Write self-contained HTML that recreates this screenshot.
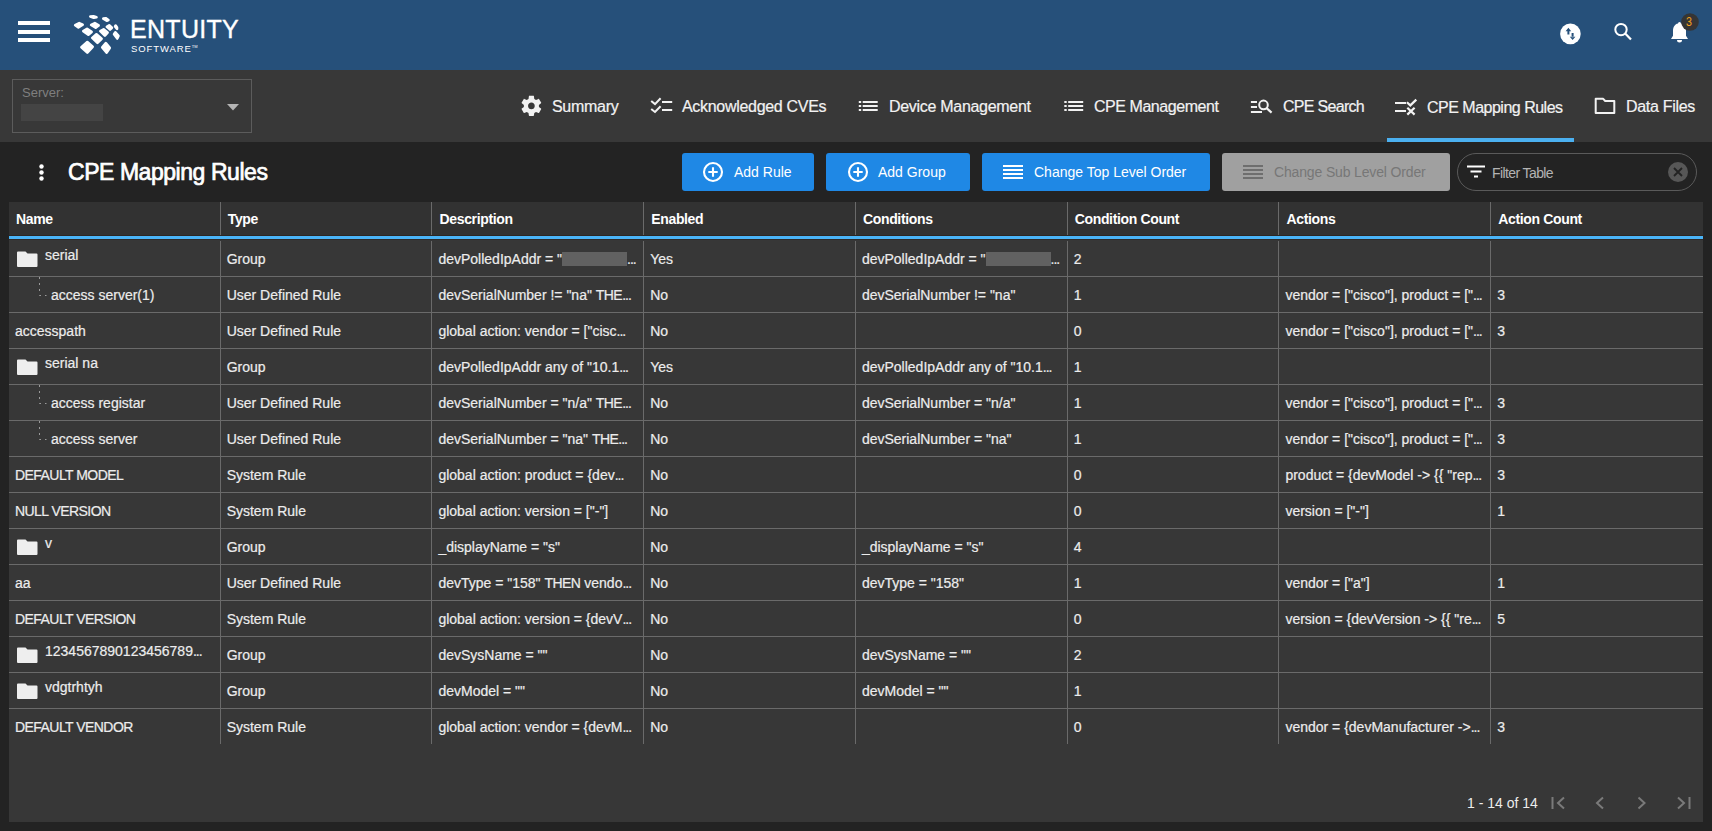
<!DOCTYPE html><html><head><meta charset="utf-8"><title>CPE Mapping Rules</title><style>
*{box-sizing:border-box;margin:0;padding:0}
html,body{width:1712px;height:831px;overflow:hidden;background:#232323;font-family:"Liberation Sans",sans-serif;color:#ececec}
body>div,body>span,body>svg{position:absolute}
.t{white-space:nowrap}
.tab{top:98px;font-size:16px;line-height:18px;color:#f2f2f2;letter-spacing:-0.3px;-webkit-text-stroke:0.2px #f2f2f2}
.btn{top:153px;height:38px;border-radius:3px;background:#1f88e5}
.bt{top:164px;font-size:14px;line-height:16px;color:#fff;white-space:nowrap}
.th{top:211px;font-size:14px;font-weight:bold;line-height:16px;color:#fff;white-space:nowrap;letter-spacing:-0.35px}
.td{font-size:14px;line-height:16px;color:#ececec;white-space:nowrap;-webkit-text-stroke:0.2px #ececec}
.vl{width:1px;background:#6a6a6a}
.hl{left:9px;width:1694px;height:1px;background:#6a6a6a}
</style></head><body>
<div style="left:0;top:0;width:1712px;height:70px;background:#26507a"></div>
<div style="left:18px;top:21px;width:32px;height:4px;background:#fff"></div>
<div style="left:18px;top:29.5px;width:32px;height:4px;background:#fff"></div>
<div style="left:18px;top:38px;width:32px;height:4px;background:#fff"></div>
<svg style="left:0;top:0" width="140" height="70" viewBox="0 0 140 70"><polygon points="90.34,16.51 93.46,16.20 96.49,17.26 93.76,17.79" fill="#fff" stroke="#fff" stroke-width="2.6" stroke-linejoin="round"/><polygon points="103.29,18.60 105.66,18.19 108.44,20.02 106.74,20.76" fill="#fff" stroke="#fff" stroke-width="2.6" stroke-linejoin="round"/><polygon points="75.19,25.21 79.22,23.12 82.69,24.62 78.40,27.41" fill="#fff" stroke="#fff" stroke-width="2.6" stroke-linejoin="round"/><polygon points="91.15,24.86 94.82,23.13 98.65,25.46 95.67,27.69" fill="#fff" stroke="#fff" stroke-width="2.6" stroke-linejoin="round"/><polygon points="106.84,26.87 109.20,25.29 111.93,27.75 110.03,29.58" fill="#fff" stroke="#fff" stroke-width="2.6" stroke-linejoin="round"/><polygon points="115.09,26.47 115.67,25.50 116.98,27.53 117.05,28.87" fill="#fff" stroke="#fff" stroke-width="2.6" stroke-linejoin="round"/><polygon points="83.30,31.12 87.05,28.80 91.61,31.93 88.35,34.73" fill="#fff" stroke="#fff" stroke-width="2.6" stroke-linejoin="round"/><polygon points="100.32,31.05 103.57,29.35 107.60,32.63 104.88,35.54" fill="#fff" stroke="#fff" stroke-width="2.6" stroke-linejoin="round"/><polygon points="114.05,34.22 115.36,32.28 118.48,35.93 117.26,38.54" fill="#fff" stroke="#fff" stroke-width="2.6" stroke-linejoin="round"/><polygon points="92.24,37.87 96.43,34.23 101.63,38.71 97.45,42.82" fill="#fff" stroke="#fff" stroke-width="2.6" stroke-linejoin="round"/><polygon points="81.42,47.18 87.30,42.09 92.70,46.75 87.30,52.56" fill="#fff" stroke="#fff" stroke-width="2.6" stroke-linejoin="round"/><polygon points="102.25,47.34 105.83,43.17 109.75,47.93 106.67,52.57" fill="#fff" stroke="#fff" stroke-width="2.6" stroke-linejoin="round"/></svg>
<span class="t" style="left:130px;top:15px;font-size:25px;line-height:28px;color:#fff;letter-spacing:0.3px;-webkit-text-stroke:0.35px #fff">ENTUITY</span>
<span class="t" style="left:131px;top:43px;font-size:9.5px;line-height:11px;color:#fff;letter-spacing:0.9px">SOFTWARE<span style="position:relative;font-size:4px;top:-4px;letter-spacing:0">TM</span></span>
<svg style="left:1555px;top:10px" width="150" height="50" viewBox="1555 10 150 50"><circle cx="1570.4" cy="33.9" r="10.3" fill="#fff"/><path d="M1567.4 30.6h2v4h-2z M1565.6 31.3L1568.4 27.8L1571.2 31.3z" fill="#26507a"/><path d="M1571.6 33.1h2v4.2h-2z M1569.8 36.7L1572.6 40L1575.4 36.7z" fill="#26507a"/><circle cx="1621" cy="29.6" r="5.7" stroke="#fff" stroke-width="2" fill="none"/><path d="M1625.2 33.6L1631 39.6" stroke="#fff" stroke-width="2.2"/><path d="M1679.5 23.2c-4 0-6.5 3.2-6.5 7.5v5l-2 3.2h17l-2-3.2v-5c0-4.3-2.5-7.5-6.5-7.5z" fill="#fff"/><circle cx="1679.5" cy="23.6" r="1.5" fill="#fff"/><path d="M1677 40h5a2.5 2.5 0 0 1-5 0z" fill="#fff"/><circle cx="1690" cy="22" r="8.8" fill="#353535"/></svg>
<span class="t" style="left:1686.3px;top:14.2px;font-size:13px;line-height:15px;color:#f7a21b;transform:scaleX(0.82);transform-origin:0 0">3</span>
<div style="left:0;top:70px;width:1712px;height:72px;background:#383838"></div>
<div style="left:12px;top:79px;width:240px;height:54px;border:1px solid #5c5c5c"></div>
<span class="t" style="left:22px;top:85px;font-size:13px;line-height:15px;color:#7f7f7f">Server:</span>
<div style="left:21px;top:104px;width:82px;height:17px;background:#444"></div>
<svg style="left:226px;top:103px" width="14" height="9"><path d="M1 1h12l-6 6.5z" fill="#b4b4b4"/></svg>
<span class="t tab" style="left:552px;top:98px;letter-spacing:-0.3px">Summary</span>
<span class="t tab" style="left:682px;top:98px;letter-spacing:-0.3px">Acknowledged CVEs</span>
<span class="t tab" style="left:889px;top:98px;letter-spacing:-0.3px">Device Management</span>
<span class="t tab" style="left:1094px;top:98px;letter-spacing:-0.45px">CPE Management</span>
<span class="t tab" style="left:1283px;top:98px;letter-spacing:-0.7px">CPE Search</span>
<span class="t tab" style="left:1427px;top:99px;letter-spacing:-0.5px">CPE Mapping Rules</span>
<span class="t tab" style="left:1626px;top:98px;letter-spacing:-0.3px">Data Files</span>
<svg style="left:0;top:70px" width="1712" height="72" viewBox="0 70 1712 72"><g transform="translate(518.8,93.3) scale(1.05)"><path fill="#f2f2f2" fill-rule="evenodd" d="M19.14,12.94c0.04-0.3,0.06-0.61,0.06-0.94c0-0.32-0.02-0.64-0.07-0.94l2.03-1.58c0.18-0.14,0.23-0.41,0.12-0.61l-1.92-3.32c-0.12-0.22-0.37-0.29-0.59-0.22l-2.39,0.96c-0.5-0.38-1.03-0.7-1.62-0.94L14.4,2.81c-0.04-0.24-0.24-0.41-0.48-0.41h-3.84c-0.24,0-0.43,0.17-0.47,0.41L9.25,5.35C8.66,5.59,8.12,5.92,7.63,6.29L5.24,5.33c-0.22-0.08-0.47,0-0.59,0.22L2.74,8.87C2.62,9.08,2.66,9.34,2.86,9.48l2.03,1.58C4.84,11.36,4.8,11.69,4.8,12s0.02,0.64,0.07,0.94l-2.03,1.58c-0.18,0.14-0.23,0.41-0.12,0.61l1.92,3.32c0.12,0.22,0.37,0.29,0.59,0.22l2.39-0.96c0.5,0.38,1.03,0.7,1.62,0.94l0.36,2.54c0.05,0.24,0.24,0.41,0.48,0.41h3.84c0.24,0,0.44-0.17,0.47-0.41l0.36-2.54c0.59-0.24,1.13-0.56,1.62-0.94l2.39,0.96c0.22,0.08,0.47,0,0.59-0.22l1.92-3.32c0.12-0.22,0.07-0.47-0.12-0.61L19.14,12.94z M12,15.2c-1.77,0-3.2-1.43-3.2-3.2s1.43-3.2,3.2-3.2s3.2,1.43,3.2,3.2S13.77,15.2,12,15.2z"/></g><path d="M651.2 100.9l3.8 3.2 5.6-5.8M651.2 108.9l3.8 3.1 5.6-5.8" stroke="#f2f2f2" stroke-width="2" fill="none"/><path d="M662 102h10.2M662 110h10.2" stroke="#f2f2f2" stroke-width="2"/><path d="M858.8 102h2.4M858.8 106h2.4M858.8 110h2.4M862.7 102h15M862.7 106h15M862.7 110h15" stroke="#f2f2f2" stroke-width="2"/><path d="M1064.3 102h2.4M1064.3 106h2.4M1064.3 110h2.4M1068.2 102h15M1068.2 106h15M1068.2 110h15" stroke="#f2f2f2" stroke-width="2"/><path d="M1250.9 102h6.1M1250.9 107h6.1M1250.9 112h11.1" stroke="#f2f2f2" stroke-width="2"/><circle cx="1263.5" cy="104.9" r="4.3" stroke="#f2f2f2" stroke-width="2" fill="none"/><path d="M1266.6 108.2l5 4.4" stroke="#f2f2f2" stroke-width="2.2"/><path d="M1395 103h11M1395 111h11" stroke="#f2f2f2" stroke-width="2"/><path d="M1406.9 102.3l3.4 3.1 6-5.8" stroke="#f2f2f2" stroke-width="2.2" fill="none"/><path d="M1407.3 107.8l7.3 6.8M1414.6 107.8l-7.3 6.8" stroke="#f2f2f2" stroke-width="2.2"/><path d="M1595.7 98.8h7.5l2 2.2h9.1v11.9h-18.6z" stroke="#f2f2f2" stroke-width="2" fill="none" stroke-linejoin="round"/></svg>
<div style="left:1387px;top:138px;width:187px;height:4px;background:#4bb0f0"></div>
<svg style="left:36px;top:160.5px" width="12" height="24"><circle cx="5.5" cy="5.5" r="2.2" fill="#fff"/><circle cx="5.5" cy="11.5" r="2.2" fill="#fff"/><circle cx="5.5" cy="17.5" r="2.2" fill="#fff"/></svg>
<span class="t" style="left:68px;top:159px;font-size:23px;line-height:26px;color:#fff;letter-spacing:-0.45px;-webkit-text-stroke:0.7px #fff">CPE Mapping Rules</span>
<div class="btn" style="left:682px;width:132px"></div>
<svg style="left:702px;top:161px" width="22" height="22" viewBox="0 0 22 22"><circle cx="11" cy="11" r="9" stroke="#fff" stroke-width="2.1" fill="none"/><path d="M11 6.3v9.4M6.3 11h9.4" stroke="#fff" stroke-width="2.1"/></svg>
<span class="bt" style="left:734px">Add Rule</span>
<div class="btn" style="left:826px;width:144px"></div>
<svg style="left:846.5px;top:161px" width="22" height="22" viewBox="0 0 22 22"><circle cx="11" cy="11" r="9" stroke="#fff" stroke-width="2.1" fill="none"/><path d="M11 6.3v9.4M6.3 11h9.4" stroke="#fff" stroke-width="2.1"/></svg>
<span class="bt" style="left:878px">Add Group</span>
<div class="btn" style="left:982px;width:228px"></div>
<svg style="left:1003px;top:164px" width="20" height="16" viewBox="0 0 20 16"><path d="M0 2h20M0 6h20M0 10h20M0 14h20" stroke="#fff" stroke-width="1.8"/></svg>
<span class="bt" style="left:1034px">Change Top Level Order</span>
<div class="btn" style="left:1222px;width:228px;background:#a0a0a0"></div>
<svg style="left:1243px;top:164px" width="20" height="16" viewBox="0 0 20 16"><path d="M0 2h20M0 6h20M0 10h20M0 14h20" stroke="#6e6e6e" stroke-width="1.8"/></svg>
<span class="bt" style="left:1274px;color:#777;letter-spacing:-0.15px">Change Sub Level Order</span>
<div style="left:1457px;top:153px;width:240px;height:38px;border:1px solid #5a5a5a;border-radius:19px"></div>
<svg style="left:1466px;top:165px" width="20" height="14" viewBox="0 0 20 14"><path d="M1 1.5h18M4.5 6.5h11M8 11.5h4" stroke="#fff" stroke-width="1.8"/></svg>
<span class="t" style="left:1492px;top:165px;font-size:14px;line-height:16px;color:#b4b4b4;letter-spacing:-0.6px">Filter Table</span>
<svg style="left:1667px;top:161px" width="22" height="22" viewBox="0 0 22 22"><circle cx="11" cy="11" r="10" fill="#575757"/><path d="M7 7l8 8M15 7l-8 8" stroke="#232323" stroke-width="1.8"/></svg>
<div style="left:9px;top:202px;width:1694px;height:620px;background:#373737"></div>
<div style="left:9px;top:202px;width:1694px;height:34px;background:#323232"></div>
<span class="th" style="left:16.00px">Name</span>
<span class="th" style="left:227.75px">Type</span>
<div class="vl" style="left:220px;top:202px;height:34px"></div>
<span class="th" style="left:439.50px">Description</span>
<div class="vl" style="left:431px;top:202px;height:34px"></div>
<span class="th" style="left:651.25px">Enabled</span>
<div class="vl" style="left:643px;top:202px;height:34px"></div>
<span class="th" style="left:863.00px">Conditions</span>
<div class="vl" style="left:855px;top:202px;height:34px"></div>
<span class="th" style="left:1074.75px">Condition Count</span>
<div class="vl" style="left:1067px;top:202px;height:34px"></div>
<span class="th" style="left:1286.50px">Actions</span>
<div class="vl" style="left:1278px;top:202px;height:34px"></div>
<span class="th" style="left:1498.25px">Action Count</span>
<div class="vl" style="left:1490px;top:202px;height:34px"></div>
<div style="left:9px;top:235px;width:1694px;height:1px;background:#2c2725"></div>
<div style="left:9px;top:236px;width:1694px;height:3px;background:#4ab4f8"></div>
<div style="left:9px;top:239px;width:1694px;height:1px;background:#2e2a28"></div>
<svg style="left:16px;top:251px" width="22" height="17" viewBox="0 0 22 17"><path d="M1.5 0.5h8l2 2h9a1 1 0 0 1 1 1v11.5a1 1 0 0 1-1 1h-18.5a1 1 0 0 1-1-1v-13.5a1 1 0 0 1 1-1z" fill="#eeeeee"/></svg>
<span class="td" style="left:45px;top:247px">serial</span>
<span class="td" style="left:226.65px;top:251px">Group</span>
<span class="td" style="left:438.40px;top:251px">devPolledIpAddr = "<span style="position:relative;display:inline-block;width:65px;height:14px;background:#616161;vertical-align:-2px"></span><span style="letter-spacing:-1px">...</span></span>
<span class="td" style="left:650.15px;top:251px">Yes</span>
<span class="td" style="left:861.90px;top:251px">devPolledIpAddr = "<span style="position:relative;display:inline-block;width:65px;height:14px;background:#616161;vertical-align:-2px"></span><span style="letter-spacing:-1px">...</span></span>
<span class="td" style="left:1073.65px;top:251px">2</span>
<div class="vl" style="left:220px;top:241px;height:35px"></div>
<div class="vl" style="left:431px;top:241px;height:35px"></div>
<div class="vl" style="left:643px;top:241px;height:35px"></div>
<div class="vl" style="left:855px;top:241px;height:35px"></div>
<div class="vl" style="left:1067px;top:241px;height:35px"></div>
<div class="vl" style="left:1278px;top:241px;height:35px"></div>
<div class="vl" style="left:1490px;top:241px;height:35px"></div>
<div class="hl" style="top:276px"></div>
<svg style="left:38px;top:277px" width="10" height="20" viewBox="0 0 10 20"><path d="M1.5 0v18.5h7" stroke="#9a9a9a" stroke-width="1" stroke-dasharray="2 4" fill="none"/></svg>
<span class="td" style="left:51px;top:287px">access server(1)</span>
<span class="td" style="left:226.65px;top:287px">User Defined Rule</span>
<span class="td" style="left:438.40px;top:287px">devSerialNumber != "na" <span style="letter-spacing:-0.55px">THE</span><span style="letter-spacing:-1px">...</span></span>
<span class="td" style="left:650.15px;top:287px">No</span>
<span class="td" style="left:861.90px;top:287px">devSerialNumber != "na"</span>
<span class="td" style="left:1073.65px;top:287px">1</span>
<span class="td" style="left:1285.40px;top:287px">vendor = ["cisco"], product = ["<span style="letter-spacing:-1px">...</span></span>
<span class="td" style="left:1497.15px;top:287px">3</span>
<div class="vl" style="left:220px;top:277px;height:35px"></div>
<div class="vl" style="left:431px;top:277px;height:35px"></div>
<div class="vl" style="left:643px;top:277px;height:35px"></div>
<div class="vl" style="left:855px;top:277px;height:35px"></div>
<div class="vl" style="left:1067px;top:277px;height:35px"></div>
<div class="vl" style="left:1278px;top:277px;height:35px"></div>
<div class="vl" style="left:1490px;top:277px;height:35px"></div>
<div class="hl" style="top:312px"></div>
<span class="td" style="left:15px;top:323px">accesspath</span>
<span class="td" style="left:226.65px;top:323px">User Defined Rule</span>
<span class="td" style="left:438.40px;top:323px">global action: vendor = ["cisc<span style="letter-spacing:-1px">...</span></span>
<span class="td" style="left:650.15px;top:323px">No</span>
<span class="td" style="left:1073.65px;top:323px">0</span>
<span class="td" style="left:1285.40px;top:323px">vendor = ["cisco"], product = ["<span style="letter-spacing:-1px">...</span></span>
<span class="td" style="left:1497.15px;top:323px">3</span>
<div class="vl" style="left:220px;top:313px;height:35px"></div>
<div class="vl" style="left:431px;top:313px;height:35px"></div>
<div class="vl" style="left:643px;top:313px;height:35px"></div>
<div class="vl" style="left:855px;top:313px;height:35px"></div>
<div class="vl" style="left:1067px;top:313px;height:35px"></div>
<div class="vl" style="left:1278px;top:313px;height:35px"></div>
<div class="vl" style="left:1490px;top:313px;height:35px"></div>
<div class="hl" style="top:348px"></div>
<svg style="left:16px;top:359px" width="22" height="17" viewBox="0 0 22 17"><path d="M1.5 0.5h8l2 2h9a1 1 0 0 1 1 1v11.5a1 1 0 0 1-1 1h-18.5a1 1 0 0 1-1-1v-13.5a1 1 0 0 1 1-1z" fill="#eeeeee"/></svg>
<span class="td" style="left:45px;top:355px">serial na</span>
<span class="td" style="left:226.65px;top:359px">Group</span>
<span class="td" style="left:438.40px;top:359px">devPolledIpAddr any of "10.1<span style="letter-spacing:-1px">...</span></span>
<span class="td" style="left:650.15px;top:359px">Yes</span>
<span class="td" style="left:861.90px;top:359px">devPolledIpAddr any of "10.1<span style="letter-spacing:-1px">...</span></span>
<span class="td" style="left:1073.65px;top:359px">1</span>
<div class="vl" style="left:220px;top:349px;height:35px"></div>
<div class="vl" style="left:431px;top:349px;height:35px"></div>
<div class="vl" style="left:643px;top:349px;height:35px"></div>
<div class="vl" style="left:855px;top:349px;height:35px"></div>
<div class="vl" style="left:1067px;top:349px;height:35px"></div>
<div class="vl" style="left:1278px;top:349px;height:35px"></div>
<div class="vl" style="left:1490px;top:349px;height:35px"></div>
<div class="hl" style="top:384px"></div>
<svg style="left:38px;top:385px" width="10" height="20" viewBox="0 0 10 20"><path d="M1.5 0v18.5h7" stroke="#9a9a9a" stroke-width="1" stroke-dasharray="2 4" fill="none"/></svg>
<span class="td" style="left:51px;top:395px">access registar</span>
<span class="td" style="left:226.65px;top:395px">User Defined Rule</span>
<span class="td" style="left:438.40px;top:395px">devSerialNumber = "n/a" <span style="letter-spacing:-0.55px">THE</span><span style="letter-spacing:-1px">...</span></span>
<span class="td" style="left:650.15px;top:395px">No</span>
<span class="td" style="left:861.90px;top:395px">devSerialNumber = "n/a"</span>
<span class="td" style="left:1073.65px;top:395px">1</span>
<span class="td" style="left:1285.40px;top:395px">vendor = ["cisco"], product = ["<span style="letter-spacing:-1px">...</span></span>
<span class="td" style="left:1497.15px;top:395px">3</span>
<div class="vl" style="left:220px;top:385px;height:35px"></div>
<div class="vl" style="left:431px;top:385px;height:35px"></div>
<div class="vl" style="left:643px;top:385px;height:35px"></div>
<div class="vl" style="left:855px;top:385px;height:35px"></div>
<div class="vl" style="left:1067px;top:385px;height:35px"></div>
<div class="vl" style="left:1278px;top:385px;height:35px"></div>
<div class="vl" style="left:1490px;top:385px;height:35px"></div>
<div class="hl" style="top:420px"></div>
<svg style="left:38px;top:421px" width="10" height="20" viewBox="0 0 10 20"><path d="M1.5 0v18.5h7" stroke="#9a9a9a" stroke-width="1" stroke-dasharray="2 4" fill="none"/></svg>
<span class="td" style="left:51px;top:431px">access server</span>
<span class="td" style="left:226.65px;top:431px">User Defined Rule</span>
<span class="td" style="left:438.40px;top:431px">devSerialNumber = "na" <span style="letter-spacing:-0.55px">THE</span><span style="letter-spacing:-1px">...</span></span>
<span class="td" style="left:650.15px;top:431px">No</span>
<span class="td" style="left:861.90px;top:431px">devSerialNumber = "na"</span>
<span class="td" style="left:1073.65px;top:431px">1</span>
<span class="td" style="left:1285.40px;top:431px">vendor = ["cisco"], product = ["<span style="letter-spacing:-1px">...</span></span>
<span class="td" style="left:1497.15px;top:431px">3</span>
<div class="vl" style="left:220px;top:421px;height:35px"></div>
<div class="vl" style="left:431px;top:421px;height:35px"></div>
<div class="vl" style="left:643px;top:421px;height:35px"></div>
<div class="vl" style="left:855px;top:421px;height:35px"></div>
<div class="vl" style="left:1067px;top:421px;height:35px"></div>
<div class="vl" style="left:1278px;top:421px;height:35px"></div>
<div class="vl" style="left:1490px;top:421px;height:35px"></div>
<div class="hl" style="top:456px"></div>
<span class="td" style="left:15px;top:467px"><span style="letter-spacing:-0.55px">DEFAULT MODEL</span></span>
<span class="td" style="left:226.65px;top:467px">System Rule</span>
<span class="td" style="left:438.40px;top:467px">global action: product = {dev<span style="letter-spacing:-1px">...</span></span>
<span class="td" style="left:650.15px;top:467px">No</span>
<span class="td" style="left:1073.65px;top:467px">0</span>
<span class="td" style="left:1285.40px;top:467px">product = {devModel -&gt; {{ "rep<span style="letter-spacing:-1px">...</span></span>
<span class="td" style="left:1497.15px;top:467px">3</span>
<div class="vl" style="left:220px;top:457px;height:35px"></div>
<div class="vl" style="left:431px;top:457px;height:35px"></div>
<div class="vl" style="left:643px;top:457px;height:35px"></div>
<div class="vl" style="left:855px;top:457px;height:35px"></div>
<div class="vl" style="left:1067px;top:457px;height:35px"></div>
<div class="vl" style="left:1278px;top:457px;height:35px"></div>
<div class="vl" style="left:1490px;top:457px;height:35px"></div>
<div class="hl" style="top:492px"></div>
<span class="td" style="left:15px;top:503px"><span style="letter-spacing:-0.55px">NULL VERSION</span></span>
<span class="td" style="left:226.65px;top:503px">System Rule</span>
<span class="td" style="left:438.40px;top:503px">global action: version = ["-"]</span>
<span class="td" style="left:650.15px;top:503px">No</span>
<span class="td" style="left:1073.65px;top:503px">0</span>
<span class="td" style="left:1285.40px;top:503px">version = ["-"]</span>
<span class="td" style="left:1497.15px;top:503px">1</span>
<div class="vl" style="left:220px;top:493px;height:35px"></div>
<div class="vl" style="left:431px;top:493px;height:35px"></div>
<div class="vl" style="left:643px;top:493px;height:35px"></div>
<div class="vl" style="left:855px;top:493px;height:35px"></div>
<div class="vl" style="left:1067px;top:493px;height:35px"></div>
<div class="vl" style="left:1278px;top:493px;height:35px"></div>
<div class="vl" style="left:1490px;top:493px;height:35px"></div>
<div class="hl" style="top:528px"></div>
<svg style="left:16px;top:539px" width="22" height="17" viewBox="0 0 22 17"><path d="M1.5 0.5h8l2 2h9a1 1 0 0 1 1 1v11.5a1 1 0 0 1-1 1h-18.5a1 1 0 0 1-1-1v-13.5a1 1 0 0 1 1-1z" fill="#eeeeee"/></svg>
<span class="td" style="left:45px;top:535px">v</span>
<span class="td" style="left:226.65px;top:539px">Group</span>
<span class="td" style="left:438.40px;top:539px">_displayName = "s"</span>
<span class="td" style="left:650.15px;top:539px">No</span>
<span class="td" style="left:861.90px;top:539px">_displayName = "s"</span>
<span class="td" style="left:1073.65px;top:539px">4</span>
<div class="vl" style="left:220px;top:529px;height:35px"></div>
<div class="vl" style="left:431px;top:529px;height:35px"></div>
<div class="vl" style="left:643px;top:529px;height:35px"></div>
<div class="vl" style="left:855px;top:529px;height:35px"></div>
<div class="vl" style="left:1067px;top:529px;height:35px"></div>
<div class="vl" style="left:1278px;top:529px;height:35px"></div>
<div class="vl" style="left:1490px;top:529px;height:35px"></div>
<div class="hl" style="top:564px"></div>
<span class="td" style="left:15px;top:575px">aa</span>
<span class="td" style="left:226.65px;top:575px">User Defined Rule</span>
<span class="td" style="left:438.40px;top:575px">devType = "158" <span style="letter-spacing:-0.55px">THEN</span> vendo<span style="letter-spacing:-1px">...</span></span>
<span class="td" style="left:650.15px;top:575px">No</span>
<span class="td" style="left:861.90px;top:575px">devType = "158"</span>
<span class="td" style="left:1073.65px;top:575px">1</span>
<span class="td" style="left:1285.40px;top:575px">vendor = ["a"]</span>
<span class="td" style="left:1497.15px;top:575px">1</span>
<div class="vl" style="left:220px;top:565px;height:35px"></div>
<div class="vl" style="left:431px;top:565px;height:35px"></div>
<div class="vl" style="left:643px;top:565px;height:35px"></div>
<div class="vl" style="left:855px;top:565px;height:35px"></div>
<div class="vl" style="left:1067px;top:565px;height:35px"></div>
<div class="vl" style="left:1278px;top:565px;height:35px"></div>
<div class="vl" style="left:1490px;top:565px;height:35px"></div>
<div class="hl" style="top:600px"></div>
<span class="td" style="left:15px;top:611px"><span style="letter-spacing:-0.55px">DEFAULT VERSION</span></span>
<span class="td" style="left:226.65px;top:611px">System Rule</span>
<span class="td" style="left:438.40px;top:611px">global action: version = {devV<span style="letter-spacing:-1px">...</span></span>
<span class="td" style="left:650.15px;top:611px">No</span>
<span class="td" style="left:1073.65px;top:611px">0</span>
<span class="td" style="left:1285.40px;top:611px">version = {devVersion -&gt; {{ "re<span style="letter-spacing:-1px">...</span></span>
<span class="td" style="left:1497.15px;top:611px">5</span>
<div class="vl" style="left:220px;top:601px;height:35px"></div>
<div class="vl" style="left:431px;top:601px;height:35px"></div>
<div class="vl" style="left:643px;top:601px;height:35px"></div>
<div class="vl" style="left:855px;top:601px;height:35px"></div>
<div class="vl" style="left:1067px;top:601px;height:35px"></div>
<div class="vl" style="left:1278px;top:601px;height:35px"></div>
<div class="vl" style="left:1490px;top:601px;height:35px"></div>
<div class="hl" style="top:636px"></div>
<svg style="left:16px;top:647px" width="22" height="17" viewBox="0 0 22 17"><path d="M1.5 0.5h8l2 2h9a1 1 0 0 1 1 1v11.5a1 1 0 0 1-1 1h-18.5a1 1 0 0 1-1-1v-13.5a1 1 0 0 1 1-1z" fill="#eeeeee"/></svg>
<span class="td" style="left:45px;top:643px">1234567890123456789<span style="letter-spacing:-1px">...</span></span>
<span class="td" style="left:226.65px;top:647px">Group</span>
<span class="td" style="left:438.40px;top:647px">devSysName = ""</span>
<span class="td" style="left:650.15px;top:647px">No</span>
<span class="td" style="left:861.90px;top:647px">devSysName = ""</span>
<span class="td" style="left:1073.65px;top:647px">2</span>
<div class="vl" style="left:220px;top:637px;height:35px"></div>
<div class="vl" style="left:431px;top:637px;height:35px"></div>
<div class="vl" style="left:643px;top:637px;height:35px"></div>
<div class="vl" style="left:855px;top:637px;height:35px"></div>
<div class="vl" style="left:1067px;top:637px;height:35px"></div>
<div class="vl" style="left:1278px;top:637px;height:35px"></div>
<div class="vl" style="left:1490px;top:637px;height:35px"></div>
<div class="hl" style="top:672px"></div>
<svg style="left:16px;top:683px" width="22" height="17" viewBox="0 0 22 17"><path d="M1.5 0.5h8l2 2h9a1 1 0 0 1 1 1v11.5a1 1 0 0 1-1 1h-18.5a1 1 0 0 1-1-1v-13.5a1 1 0 0 1 1-1z" fill="#eeeeee"/></svg>
<span class="td" style="left:45px;top:679px">vdgtrhtyh</span>
<span class="td" style="left:226.65px;top:683px">Group</span>
<span class="td" style="left:438.40px;top:683px">devModel = ""</span>
<span class="td" style="left:650.15px;top:683px">No</span>
<span class="td" style="left:861.90px;top:683px">devModel = ""</span>
<span class="td" style="left:1073.65px;top:683px">1</span>
<div class="vl" style="left:220px;top:673px;height:35px"></div>
<div class="vl" style="left:431px;top:673px;height:35px"></div>
<div class="vl" style="left:643px;top:673px;height:35px"></div>
<div class="vl" style="left:855px;top:673px;height:35px"></div>
<div class="vl" style="left:1067px;top:673px;height:35px"></div>
<div class="vl" style="left:1278px;top:673px;height:35px"></div>
<div class="vl" style="left:1490px;top:673px;height:35px"></div>
<div class="hl" style="top:708px"></div>
<span class="td" style="left:15px;top:719px"><span style="letter-spacing:-0.55px">DEFAULT VENDOR</span></span>
<span class="td" style="left:226.65px;top:719px">System Rule</span>
<span class="td" style="left:438.40px;top:719px">global action: vendor = {devM<span style="letter-spacing:-1px">...</span></span>
<span class="td" style="left:650.15px;top:719px">No</span>
<span class="td" style="left:1073.65px;top:719px">0</span>
<span class="td" style="left:1285.40px;top:719px">vendor = {devManufacturer -&gt;<span style="letter-spacing:-1px">...</span></span>
<span class="td" style="left:1497.15px;top:719px">3</span>
<div class="vl" style="left:220px;top:709px;height:35px"></div>
<div class="vl" style="left:431px;top:709px;height:35px"></div>
<div class="vl" style="left:643px;top:709px;height:35px"></div>
<div class="vl" style="left:855px;top:709px;height:35px"></div>
<div class="vl" style="left:1067px;top:709px;height:35px"></div>
<div class="vl" style="left:1278px;top:709px;height:35px"></div>
<div class="vl" style="left:1490px;top:709px;height:35px"></div>
<span class="t" style="left:1467px;top:795px;font-size:14px;line-height:16px;color:#ececec">1 - 14 of 14</span>
<svg style="left:1540px;top:790px" width="160" height="24" viewBox="1540 790 160 24"><path d="M1552.5 797v12M1564 797.5l-6 5.5 6 5.5M1603 797.5l-6 5.5 6 5.5M1638.5 797.5l6 5.5-6 5.5M1678 797.5l6 5.5-6 5.5M1689.5 797v12" stroke="#7a7a7a" stroke-width="2" fill="none"/></svg>
</body></html>
